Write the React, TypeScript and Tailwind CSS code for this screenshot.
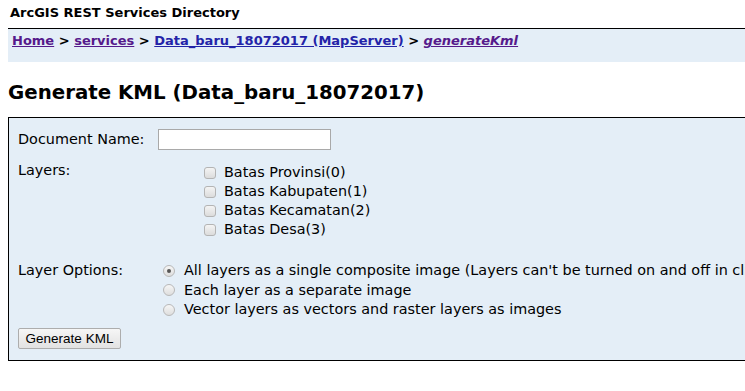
import React from "react";

const font = { fontFamily: '"DejaVu Sans", Verdana, sans-serif' };

function Check() {
  return (
    <span className="inline-block w-[12px] h-[12px] rounded-[3px] border border-[#b4b4b4] bg-gradient-to-b from-[#f4f4f4] to-[#dcdcdc] shrink-0" />
  );
}

function Radio({ on }: { on?: boolean }) {
  return (
    <span className="relative inline-flex items-center justify-center w-[12px] h-[12px] rounded-full border border-[#b8b8b8] bg-gradient-to-b from-[#f6f6f6] to-[#dedede] shrink-0">
      {on && <span className="w-[4px] h-[4px] rounded-full bg-[#555]" />}
    </span>
  );
}

export default function App() {
  const layers = ["Batas Provinsi(0)", "Batas Kabupaten(1)", "Batas Kecamatan(2)", "Batas Desa(3)"];
  const opts = [
    "All layers as a single composite image (Layers can't be turned on and off in client)",
    "Each layer as a separate image",
    "Vector layers as vectors and raster layers as images",
  ];
  return (
    <div className="w-[745px] h-[391px] overflow-hidden bg-white text-black" style={font}>
      <div className="w-[1000px]">
        <div className="pl-[10px] pt-[5px] h-[28px] text-[13px] font-bold leading-[16px]">ArcGIS REST Services Directory</div>
        <div className="ml-[8px] border-t border-black bg-[#e4eef7] h-[34px] pl-[4px] pt-[3px] text-[13px] font-bold leading-[18px]">
          <a className="underline text-[#551a8b]">Home</a>
          <span> &gt; </span>
          <a className="underline text-[#551a8b]">services</a>
          <span> &gt; </span>
          <a className="underline text-[#2323a8]">Data_baru_18072017 (MapServer)</a>
          <span> &gt; </span>
          <a className="underline italic text-[#551a8b]">generateKml</a>
        </div>
        <h2 className="ml-[8px] mt-[19px] text-[19.8px] font-bold leading-[24px]">Generate KML (Data_baru_18072017)</h2>
        <div className="ml-[8px] mt-[12px] border border-black bg-[#e4eef7] h-[244px] pl-[9px] pt-[11px] text-[14.4px] leading-[17px]">
          <div className="grid grid-cols-[140px_1fr]">
            <div className="pt-[2px]">Document Name:</div>
            <div className="h-[21px]">
              <input className="w-[173px] h-[21px] border border-[#a9a9a9] bg-white outline-none" />
            </div>
            <div className="pt-[12px]">Layers:</div>
            <div className="pt-[13px] pl-[46px] flex flex-col">
              {layers.map((l) => (
                <div key={l} className="flex items-center gap-[8px] h-[19px]">
                  <Check />
                  <span>{l}</span>
                </div>
              ))}
            </div>
            <div className="pt-[23px]">Layer Options:</div>
            <div className="pt-[22px] pl-[5px] flex flex-col">
              {opts.map((o, i) => (
                <div key={o} className="flex items-center gap-[9px] h-[19.5px] whitespace-nowrap">
                  <Radio on={i === 0} />
                  <span>{o}</span>
                </div>
              ))}
            </div>
          </div>
          <button
            className="mt-[8px] h-[21px] w-[103px] border border-[#adadad] rounded-[2px] bg-gradient-to-b from-[#f6f6f6] to-[#e2e2e2] text-[13.5px] leading-[19px] text-black"
            style={{ fontFamily: '"Liberation Sans", Arial, sans-serif' }}
          >
            Generate KML
          </button>
        </div>
      </div>
    </div>
  );
}
